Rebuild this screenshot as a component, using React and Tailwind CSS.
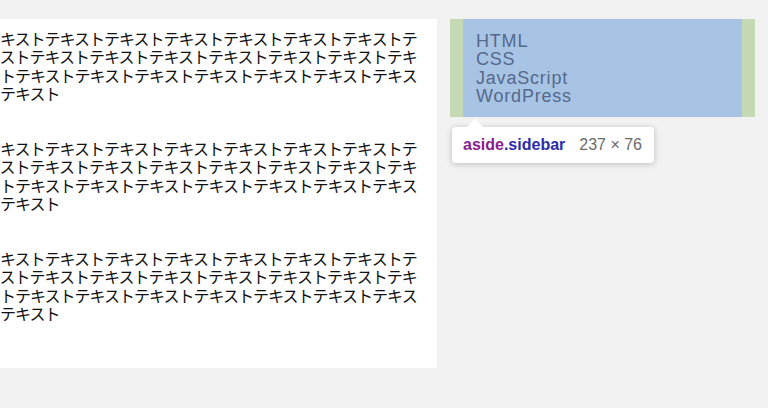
import React from 'react';

const text = 'テキスト'.repeat(23);

export default function App() {
  return (
    <div className="w-[768px] h-[408px] overflow-hidden bg-[#f2f2f2] flex items-start pt-[19px]">
      <main className="-ml-[25px] w-[462px] h-[349px] shrink-0 bg-white pl-[10px] pr-[16px] pt-[10px] text-[16px] tracking-[-1px] leading-[18.4px] text-[#111] font-['Noto_Sans_CJK_JP',sans-serif]">
        <p className="mb-[36.4px]">{text}</p>
        <p className="mb-[36.4px]">{text}</p>
        <p className="mb-[36.4px]">{text}</p>
      </main>

      <div className="ml-[13px] w-[305px] shrink-0">
        <aside className="h-[98px] bg-[#c4d9b4] px-[13px]">
          <ul className="h-full bg-[#a7c4e5] pl-[13px] pt-[13px] text-[18px] leading-[18.3px] tracking-[0.8px] text-[#56698b] font-['Liberation_Sans',Arial,sans-serif]">
            <li>HTML</li>
            <li>CSS</li>
            <li>JavaScript</li>
            <li>WordPress</li>
          </ul>
        </aside>

        <div className="relative mt-[10px] ml-[2px] w-[202px] h-[36px] bg-white rounded-[4px] shadow-[0_1px_6px_rgba(0,0,0,0.22)] flex items-center pl-[11px] gap-[14px] text-[16px] font-['Liberation_Sans',Arial,sans-serif]">
          <span className="absolute -top-[9px] left-[15px] w-0 h-0 border-x-[8px] border-x-transparent border-b-[9px] border-b-white" />
          <span className="font-bold">
            <span className="text-[#8b1c8d]">aside</span>
            <span className="text-[#2b2bb0]">.sidebar</span>
          </span>
          <span className="text-[#6b6b6b]">237 × 76</span>
        </div>
      </div>
    </div>
  );
}
